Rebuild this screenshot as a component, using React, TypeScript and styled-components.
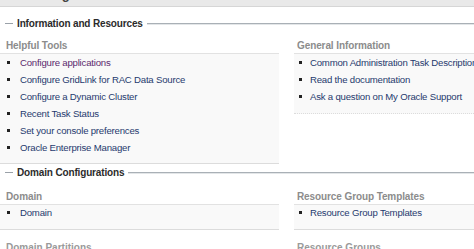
import React from "react";
import styled, { createGlobalStyle } from "styled-components";

const Global = createGlobalStyle`
  html, body { margin: 0; padding: 0; background: #ffffff; }
  body { font-family: "Liberation Sans", Arial, sans-serif; font-size: 9.6px; color: #1f3a6e; overflow: hidden; }
  * { box-sizing: border-box; }
`;

const Page = styled.div`
  width: 474px;
  height: 249px;
  overflow: hidden;
  display: flex;
  flex-direction: column;
  & > * { flex: none; }
`;

const TopStrip = styled.div`
  height: 7px;
  background: #e9e9e9;
  border-bottom: 1px solid #d6d6d6;
  overflow: hidden;
`;

const TopText = styled.div`
  font-weight: bold;
  font-size: 13px;
  line-height: 13px;
  color: #444;
  margin-top: -12px;
  padding-left: 6px;
`;

const SectionHeader = styled.div<{ $top: number }>`
  display: flex;
  align-items: center;
  gap: 4px;
  margin-top: ${(p) => p.$top}px;
  height: 14px;
  padding-left: 5px;
  font-weight: bold;
  font-size: 10px;
  letter-spacing: -0.15px;
  color: #2b2b2b;
`;

const Dash = styled.span`
  width: 8px;
  height: 1px;
  background: #9aa1a8;
`;

const Rule = styled.span`
  flex: 1;
  height: 1px;
  background: #a9b0b6;
  box-shadow: 0 1px 0 #e3e6e8;
`;

const Columns = styled.div<{ $top: number }>`
  display: grid;
  grid-template-columns: 279px 1fr;
  column-gap: 15px;
  margin-top: ${(p) => p.$top}px;
  align-items: start;
`;

const Panel = styled.div<{ $height: number; $dotted?: boolean }>`
  background: #f9f9f9;
  height: ${(p) => p.$height}px;
  border-bottom: 1px ${(p) => (p.$dotted ? "dotted" : "solid")} #dcdcdc;
`;

const PanelTitle = styled.div<{ $inset: number }>`
  height: 16px;
  line-height: 15px;
  padding-left: ${(p) => p.$inset}px;
  font-weight: bold;
  font-size: 10px;
  letter-spacing: -0.1px;
  color: #8c8c8c;
  background: #ffffff;
  border-bottom: 1px solid #e2e2e2;
`;

const List = styled.ul`
  list-style: none;
  margin: 0;
  padding: 0;
`;

const Item = styled.li<{ $visited?: boolean; $inset: number; $gap: number; $h?: number }>`
  display: flex;
  align-items: center;
  height: ${(p) => p.$h ?? 17}px;
  padding-left: ${(p) => p.$inset}px;
  white-space: nowrap;
  letter-spacing: -0.2px;
  color: ${(p) => (p.$visited ? "#5b2a6e" : "#1f3a6e")};
  &::before {
    content: "";
    width: 3px;
    height: 3px;
    background: #222;
    margin-right: ${(p) => p.$gap}px;
    flex: none;
  }
`;

const CutTitle = styled.div<{ $inset: number }>`
  padding-left: ${(p) => p.$inset}px;
  font-weight: bold;
  font-size: 10px;
  color: #9a9a9a;
  margin-top: 12px;
`;

const L = { inset: 7, gap: 10 };
const R = { inset: 5, gap: 8 };

export default function App() {
  return (
    <Page>
      <Global />
      <TopStrip>
        <TopText>Home Page</TopText>
      </TopStrip>
      <SectionHeader $top={9}>
        <Dash />
        <span>Information and Resources</span>
        <Rule />
      </SectionHeader>
      <Columns $top={8}>
        <Panel $height={126}>
          <PanelTitle $inset={6}>Helpful Tools</PanelTitle>
          <List>
            <Item $inset={L.inset} $gap={L.gap} $visited>Configure applications</Item>
            <Item $inset={L.inset} $gap={L.gap}>Configure GridLink for RAC Data Source</Item>
            <Item $inset={L.inset} $gap={L.gap}>Configure a Dynamic Cluster</Item>
            <Item $inset={L.inset} $gap={L.gap}>Recent Task Status</Item>
            <Item $inset={L.inset} $gap={L.gap}>Set your console preferences</Item>
            <Item $inset={L.inset} $gap={L.gap}>Oracle Enterprise Manager</Item>
          </List>
        </Panel>
        <Panel $height={76} $dotted>
          <PanelTitle $inset={3}>General Information</PanelTitle>
          <List>
            <Item $inset={R.inset} $gap={R.gap}>Common Administration Task Descriptions</Item>
            <Item $inset={R.inset} $gap={R.gap}>Read the documentation</Item>
            <Item $inset={R.inset} $gap={R.gap}>Ask a question on My Oracle Support</Item>
          </List>
        </Panel>
      </Columns>
      <SectionHeader $top={1}>
        <Dash />
        <span>Domain Configurations</span>
        <Rule />
      </SectionHeader>
      <Columns $top={10}>
        <div>
          <Panel $height={41}>
            <PanelTitle $inset={6}>Domain</PanelTitle>
            <List>
              <Item $inset={L.inset} $gap={L.gap} $h={15}>Domain</Item>
            </List>
          </Panel>
          <CutTitle $inset={6}>Domain Partitions</CutTitle>
        </div>
        <div>
          <Panel $height={41}>
            <PanelTitle $inset={3}>Resource Group Templates</PanelTitle>
            <List>
              <Item $inset={R.inset} $gap={R.gap} $h={15}>Resource Group Templates</Item>
            </List>
          </Panel>
          <CutTitle $inset={3}>Resource Groups</CutTitle>
        </div>
      </Columns>
    </Page>
  );
}
